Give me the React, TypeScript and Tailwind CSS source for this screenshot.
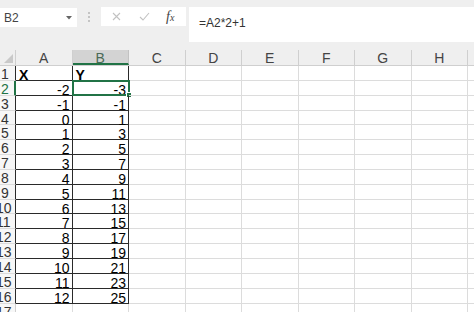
import React from "react";

const COLS = ["A", "B", "C", "D", "E", "F", "G", "H"];
const DATA: [string, string][] = [
  ["X", "Y"],
  ["-2", "-3"],
  ["-1", "-1"],
  ["0", "1"],
  ["1", "3"],
  ["2", "5"],
  ["3", "7"],
  ["4", "9"],
  ["5", "11"],
  ["6", "13"],
  ["7", "15"],
  ["8", "17"],
  ["9", "19"],
  ["10", "21"],
  ["11", "23"],
  ["12", "25"],
];

const font = { fontFamily: '"Liberation Sans", Arial, sans-serif' };

function Toolbar() {
  return (
    <div className="h-[50px] bg-[#efefef] flex items-start pt-[7px]">
      <div className="w-[77px] h-[19px] mt-[1px] bg-white flex items-center justify-between pl-[4px] pr-[5px]">
        <span className="text-[12px] text-[#444] leading-none">B2</span>
        <svg width="6" height="4" viewBox="0 0 6 4">
          <path d="M0 0 L6 0 L3 3.5 Z" fill="#666" />
        </svg>
      </div>
      <div className="ml-[11px] mt-[5px] w-[3px] flex flex-col gap-[2px]">
        <div className="w-[2px] h-[2px] bg-[#c4c4c4]" />
        <div className="w-[2px] h-[2px] bg-[#c4c4c4]" />
        <div className="w-[2px] h-[2px] bg-[#c4c4c4]" />
      </div>
      <div className="ml-[10px] w-[85px] h-[19px] bg-white flex items-center">
        <svg className="ml-[11px]" width="9" height="9" viewBox="0 0 9 9">
          <path d="M1 1 L8 8 M8 1 L1 8" stroke="#c2c2c2" strokeWidth="1.1" fill="none" />
        </svg>
        <svg className="ml-[18px]" width="11" height="9" viewBox="0 0 11 9">
          <path d="M1 5 L4 8 L10 1" stroke="#c2c2c2" strokeWidth="1.1" fill="none" />
        </svg>
        <span
          className="ml-[16px] text-[14px] italic text-[#444] leading-none"
          style={{ fontFamily: '"Liberation Serif", "Times New Roman", serif' }}
        >
          f<span className="text-[10px]">x</span>
        </span>
      </div>
      <div className="ml-[3px] flex-1 h-[35px] bg-white pl-[10px] pt-[3px]">
        <span className="text-[12px] text-[#333] leading-[14px]">=A2*2+1</span>
      </div>
    </div>
  );
}

function HeaderRow() {
  return (
    <div className="flex h-[16px] bg-[#efefef] border-b border-[#cfcfcf]">
      <div className="w-[16px] shrink-0 relative flex items-end justify-end pr-[2px] pb-[2px] border-r border-[#cfcfcf]">
        <svg width="9" height="9" viewBox="0 0 9 9">
          <path d="M9 0 L9 9 L0 9 Z" fill="#c9c9c9" />
        </svg>
      </div>
      {COLS.map((c) => {
        const sel = c === "B";
        return (
          <div
            key={c}
            className={
              sel
                ? "w-[56.5px] shrink-0 bg-[#d3d3d3] border-r border-[#c2c2c2] border-b-2 border-b-[#217346] text-center text-[14px] leading-[16px] text-[#4b6a57]"
                : "w-[56.5px] shrink-0 border-r border-[#cfcfcf] text-center text-[14px] leading-[16px] text-[#444]"
            }
          >
            {c}
          </div>
        );
      })}
      <div className="flex-1" />
    </div>
  );
}

function DataRow({ idx, vals }: { idx: number; vals?: [string, string] }) {
  const inTable = !!vals;
  const rowSel = idx === 2;
  const label = String(idx);
  return (
    <div className="flex h-[14.85px]">
      <div
        className={
          "w-[16px] shrink-0 bg-[#f7f7f7] border-b border-[#dcdcdc] overflow-hidden whitespace-nowrap text-[14px] leading-[17px] " +
          (rowSel
            ? "border-r-2 border-r-[#217346] text-[#217346]"
            : inTable
            ? "border-r border-r-[#2a2a2a] text-[#333]"
            : "border-r border-r-[#cfcfcf] text-[#333]")
        }
      >
        <span className={label.length > 1 ? "ml-[-4px]" : "ml-[1px]"}>{label}</span>
      </div>
      {COLS.map((c, ci) => {
        const dark = inTable && ci < 2;
        const v = dark ? vals![ci] : "";
        const isHeader = idx === 1;
        const sel = idx === 2 && c === "B";
        return (
          <div
            key={c}
            className={
              "w-[56.5px] shrink-0 relative whitespace-nowrap text-[14px] leading-[18px] text-black " +
              (dark ? "border-r border-b border-[#2a2a2a] " : "border-r border-b border-[#dcdcdc] ") +
              (isHeader ? "font-bold text-left pl-[3px]" : "text-right pr-[2px]")
            }
          >
            {v}
            {sel && (
              <div className="absolute left-[-1px] top-[-1px] right-[-2px] bottom-[-1px] border-2 border-[#217346]">
                <div className="absolute right-[-4px] bottom-[-4px] w-[6px] h-[6px] bg-[#217346] border border-white" />
              </div>
            )}
          </div>
        );
      })}
      <div className="flex-1 border-b border-[#dcdcdc]" />
    </div>
  );
}

export default function App() {
  return (
    <div className="w-[474px] h-[312px] overflow-hidden bg-white" style={font}>
      <Toolbar />
      <HeaderRow />
      {DATA.map((d, i) => (
        <DataRow key={i} idx={i + 1} vals={d} />
      ))}
      <DataRow idx={17} />
    </div>
  );
}
